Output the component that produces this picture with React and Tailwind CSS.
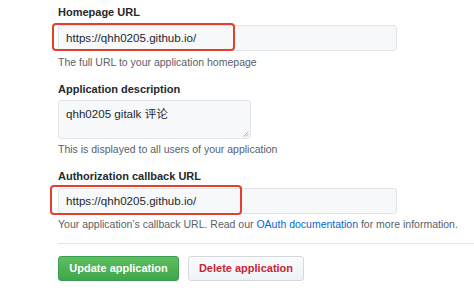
import React from 'react';

const font = { fontFamily: '"Liberation Sans", "Noto Sans CJK SC", Arial, sans-serif' };

const Mark = ({ className }) => (
  <div className={`pointer-events-none absolute rounded-[4px] border-2 border-[#e2402f] ${className}`} />
);

export default function App() {
  return (
    <div className="h-[303px] w-[474px] overflow-hidden bg-white text-[#24292e]" style={font}>
      <div className="pl-[58px] pt-[4px]">
        <div className="text-[11px] font-bold leading-[16px]">Homepage URL</div>
        <div className="relative mt-[5px] w-[339px]">
          <div className="flex h-[26px] items-center rounded-[3px] border border-[#e1e4e8] bg-[#f6f8fa] pl-[7px] text-[11.6px]">
            https://qhh0205.github.io/
          </div>
          <Mark className="left-[-6px] top-[-2px] h-[28px] w-[183px]" />
        </div>
        <div className="mt-[4px] text-[10.5px] leading-[14px] text-[#586069]">The full URL to your application homepage</div>

        <div className="mt-[12px] text-[11px] font-bold leading-[16px]">Application description</div>
        <div className="relative mt-[3px] h-[39px] w-[193px] rounded-[3px] border border-[#e1e4e8] bg-[#f6f8fa] pl-[7px] pt-[6px] text-[11.6px] leading-[14px]">
          qhh0205 gitalk 评论
          <svg className="absolute bottom-[1px] right-[1px]" width="6" height="6" viewBox="0 0 6 6">
            <path d="M5.5 0.5 L0.5 5.5 M5.5 3 L3 5.5" stroke="#999" strokeWidth="0.8" />
          </svg>
        </div>
        <div className="mt-[3px] text-[10.5px] leading-[14px] text-[#586069]">This is displayed to all users of your application</div>

        <div className="mt-[12px] text-[11px] font-bold leading-[16px]">Authorization callback URL</div>
        <div className="relative mt-[4px] w-[339px]">
          <div className="flex h-[26px] items-center rounded-[3px] border border-[#e1e4e8] bg-[#f6f8fa] pl-[7px] text-[11.6px]">
            https://qhh0205.github.io/
          </div>
          <Mark className="left-[-8px] top-[-3px] h-[30px] w-[192px]" />
        </div>
        <div className="mt-[3px] whitespace-nowrap text-[10.5px] leading-[14px] text-[#586069]">
          Your application’s callback URL. Read our <span className="text-[#0366d6]">OAuth documentation</span> for more information.
        </div>

        <div className="mt-[12px] h-px bg-[#e1e4e8]" />

        <div className="mt-[12px] flex gap-[9px]">
          <button className="h-[25px] w-[121px] rounded-[3px] border border-[#3a9d4f] bg-gradient-to-b from-[#5cbf5f] to-[#40a64b] text-[11px] font-bold text-white">
            Update application
          </button>
          <button className="h-[25px] w-[116px] rounded-[3px] border border-[#d5d8dc] bg-gradient-to-b from-[#fafbfc] to-[#eff3f6] text-[11px] font-bold text-[#cb2431]">
            Delete application
          </button>
        </div>
      </div>
    </div>
  );
}
